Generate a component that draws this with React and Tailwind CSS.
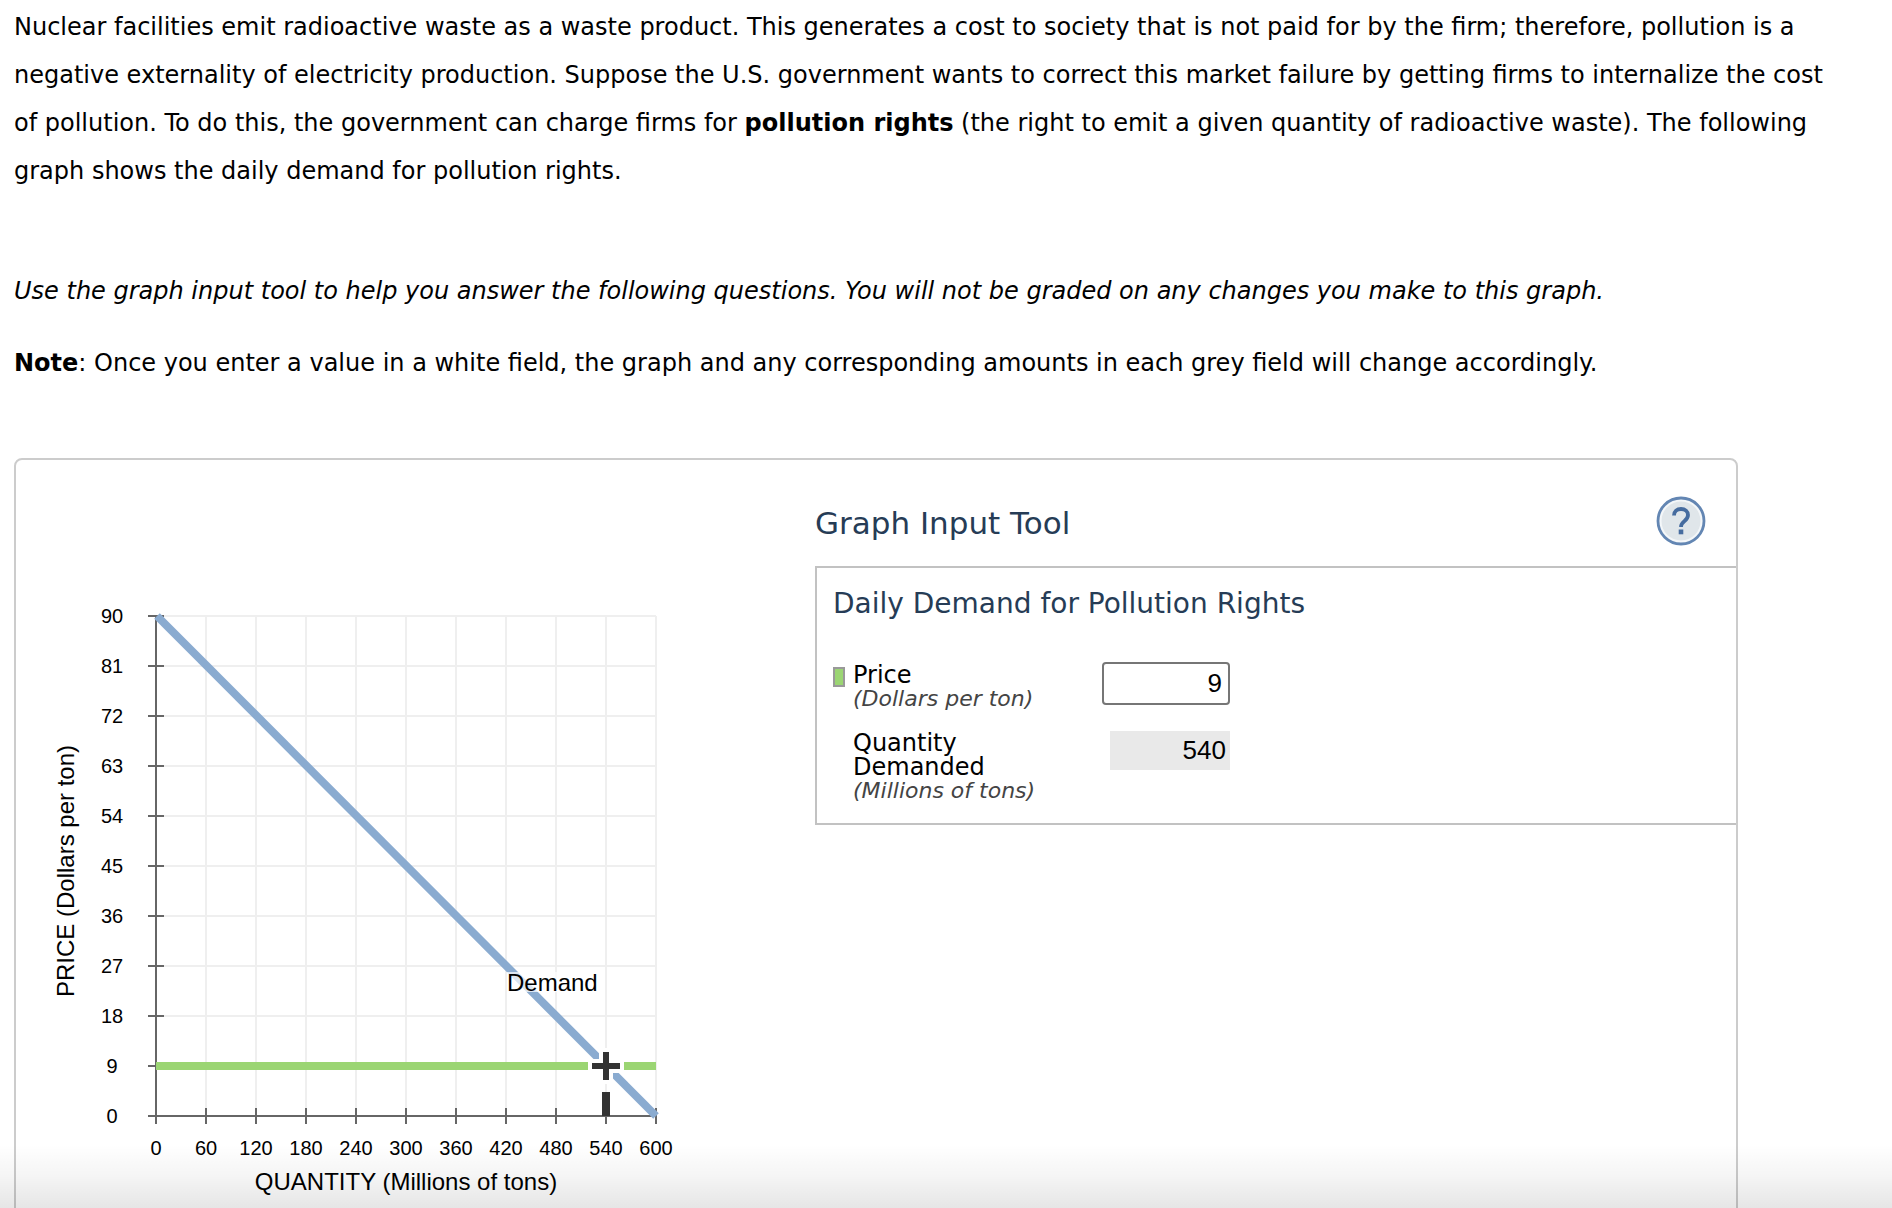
import { useState } from "react";

const STEP = 50;
const MAX_PRICE = 90;
const MAX_QUANTITY = 600;
const priceTicks = [0, 9, 18, 27, 36, 45, 54, 63, 72, 81, 90];
const quantityTicks = [0, 60, 120, 180, 240, 300, 360, 420, 480, 540, 600];

function DemandGraph({ price, quantity }) {
  // plot area starts at (100, 20) and is 500 x 500
  const px = 100 + (quantity / MAX_QUANTITY) * 500;
  const py = 520 - (price / MAX_PRICE) * 500;

  return (
    <svg
      width="648"
      height="610"
      viewBox="-8 0 648 610"
      role="img"
      aria-label="Daily demand for pollution rights"
      className="font-['Liberation_Sans',Arial,sans-serif]"
    >
      <g stroke="#efefef" strokeWidth="2">
        {quantityTicks.slice(1).map((q, i) => (
          <line key={q} x1={150 + i * STEP} x2={150 + i * STEP} y1="20" y2="520" />
        ))}
        {priceTicks.slice(1).map((p, i) => (
          <line key={p} x1="100" x2="600" y1={470 - i * STEP} y2={470 - i * STEP} />
        ))}
      </g>

      {/* Axes */}
      <g stroke="#666666" strokeWidth="2">
        <line x1="100" x2="100" y1="19" y2="528" />
        <line x1="92" x2="600" y1="520" y2="520" />
        {priceTicks.map((p, i) => (
          <line key={p} x1="92" x2="108" y1={520 - i * STEP} y2={520 - i * STEP} />
        ))}
        {quantityTicks.map((q, i) => (
          <line key={q} x1={100 + i * STEP} x2={100 + i * STEP} y1="512" y2="528" />
        ))}
      </g>
      <g className="text-[20px]" textAnchor="middle">
        {priceTicks.map((p, i) => (
          <text key={p} x="56" y={527 - i * STEP}>{p}</text>
        ))}
        {quantityTicks.map((q, i) => (
          <text key={q} x={100 + i * STEP} y="559">{q}</text>
        ))}
      </g>
      <g className="text-[24px]" textAnchor="middle">
        <text transform="translate(18 275) rotate(-90)">PRICE (Dollars per ton)</text>
        <text x="350" y="594">QUANTITY (Millions of tons)</text>
      </g>

      {/* Demand curve */}
      <line x1="101" y1="20" x2="600" y2="520" stroke="#8aabd0" strokeWidth="8" />
      <rect x="451" y="376" width="91" height="20" fill="#ffffff" fillOpacity="0.7" />
      <text x="451" y="395" className="text-[24px]">Demand</text>

      {/* Price line and marker */}
      <line x1="100" x2="600" y1={py} y2={py} stroke="#9bd573" strokeWidth="8" />
      <line x1={px} x2={px} y1="520" y2={py + 26} stroke="#333333" strokeWidth="8" strokeDasharray="24 24" />
      <path d={`M${px - 18} ${py}h36M${px} ${py - 18}v36`} stroke="#ffffff" strokeWidth="14" />
      <path d={`M${px - 14} ${py}h28M${px} ${py - 14}v28`} stroke="#333333" strokeWidth="6" />
    </svg>
  );
}

function HelpIcon() {
  return (
    <svg width="50" height="50" viewBox="0 0 50 50" fill="none" aria-hidden="true">
      <circle cx="25" cy="25" r="23" fill="#f4f7f9" stroke="#6386b3" strokeWidth="2.8" />
      <circle cx="25" cy="25" r="19.5" fill="#e0e6ea" />
      <path
        d="M18 19.500c0-4.200 3-6.500 7-6.500 4.100 0 7 2.400 7 6 0 3-1.600 4.600-3.700 6.200-2.200 1.700-3.300 2.800-3.300 5.800"
        stroke="#466c9f"
        strokeWidth="3.8"
      />
      <path d="M25 33.500v4.800" stroke="#466c9f" strokeWidth="4.6" />
    </svg>
  );
}

export default function App() {
  const [price, setPrice] = useState("9");
  const value = Math.min(Math.max(Number(price) || 0, 0), MAX_PRICE);
  const quantity = Math.round(MAX_QUANTITY - (value * MAX_QUANTITY) / MAX_PRICE);

  return (
    <div className="relative h-screen overflow-hidden bg-white px-[14px] pt-[3px] font-['DejaVu_Sans',Verdana,sans-serif] text-black">
      {/* Question text */}
      <div className="pr-8 text-[24px] leading-[48px]">
        <p>
          Nuclear facilities emit radioactive waste as a waste product. This generates a cost to society that is not paid for by the firm; therefore, pollution is a negative externality of electricity production. Suppose the U.S. government wants to correct this market failure by getting firms to internalize the cost of pollution. To do this, the government can charge firms for <b>pollution rights</b> (the right to emit a given quantity of radioactive waste). The following graph shows the daily demand for pollution rights.
        </p>
        <p className="mt-[72px] italic">
          Use the graph input tool to help you answer the following questions. You will not be graded on any changes you make to this graph.
        </p>
        <p className="mt-6">
          <b>Note</b>: Once you enter a value in a white field, the graph and any corresponding amounts in each grey field will change accordingly.
        </p>
      </div>

      {/* Graph panel */}
      <div className="mt-[71px] flex max-w-[1724px] rounded-lg border-2 border-[#cccccc]">
        <div className="w-[799px] shrink-0 pt-[136px] pb-16 pl-8">
          <DemandGraph price={value} quantity={quantity} />
        </div>

        <div className="flex-1">
          <div className="flex h-[106px] items-center justify-between pt-4 pr-[30px]">
            <h2 className="pt-1 text-[31px] leading-[36px] text-[#263c56]">Graph Input Tool</h2>
            <button type="button" aria-label="Help" className="cursor-pointer">
              <HelpIcon />
            </button>
          </div>

          <div className="h-[259px] border-y-2 border-l-2 border-[#c2c2c2] pt-4 pl-4">
            <h3 className="text-[28px] leading-[40px] text-[#263c56]">Daily Demand for Pollution Rights</h3>
            <div className="mt-[38px] flex items-start">
              <span className="mt-[5px] mr-2 h-5 w-3 border-2 border-[#999999] bg-[#9bd573]" />
              <label htmlFor="price" className="w-[249px] pt-px text-[24px] leading-[24px]">
                Price
                <span className="block text-[22px] text-[#444444] italic">(Dollars per ton)</span>
              </label>
              <input
                id="price"
                type="text"
                value={price}
                onChange={(e) => setPrice(e.target.value)}
                className="h-[43px] w-32 rounded-[4px] border-2 border-[#767676] bg-white px-[6px] text-right font-['Liberation_Sans',Arial,sans-serif] text-[26px]"
              />
            </div>
            <div className="mt-5 flex items-start pl-5">
              <label htmlFor="quantity" className="w-[257px] text-[24px] leading-[24px]">
                Quantity
                <br />
                Demanded
                <span className="block text-[22px] text-[#444444] italic">(Millions of tons)</span>
              </label>
              <output
                id="quantity"
                htmlFor="price"
                className="h-[39px] w-[120px] bg-[#e9e9e9] px-1 text-right font-['Liberation_Sans',Arial,sans-serif] text-[26px] leading-[38px]"
              >
                {quantity}
              </output>
            </div>
          </div>
        </div>
      </div>

      {/* Fade at the bottom edge */}
      <div className="pointer-events-none absolute inset-x-0 bottom-0 h-16 bg-linear-to-t from-black/10 via-black/4 to-transparent" />
    </div>
  );
}
